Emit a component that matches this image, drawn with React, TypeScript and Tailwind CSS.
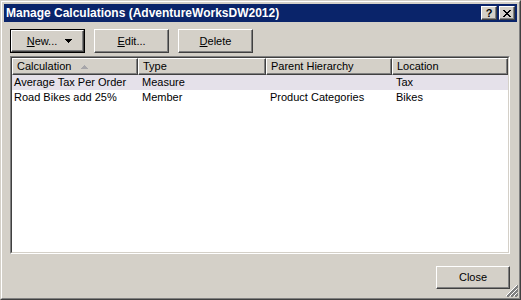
import React from 'react';

const FONT = "font-['Liberation_Sans',Arial,sans-serif]";
const RAISED =
  'border border-t-white border-l-white border-r-[#404040] border-b-[#404040] shadow-[inset_-1px_-1px_0_#808080] bg-[#d4d0c8]';

interface Row {
  name: string;
  type: string;
  parent: string;
  location: string;
}

const rows: Row[] = [
  { name: 'Average Tax Per Order', type: 'Measure', parent: '', location: 'Tax' },
  { name: 'Road Bikes add 25%', type: 'Member', parent: 'Product Categories', location: 'Bikes' },
];

const columns = [
  { label: 'Calculation', width: 'w-[126px]', sorted: true },
  { label: 'Type', width: 'w-[128px]', sorted: false },
  { label: 'Parent Hierarchy', width: 'w-[126px]', sorted: false },
  { label: 'Location', width: 'flex-1', sorted: false },
];

function Button({ children, className = '' }: { children: React.ReactNode; className?: string }) {
  return (
    <div className={`${RAISED} flex items-center justify-center text-[11px] text-black ${className}`}>
      {children}
    </div>
  );
}

export default function App() {
  return (
    <div className={`relative w-[521px] h-[300px] border border-t-[#d4d0c8] border-l-[#d4d0c8] border-r-[#404040] border-b-[#404040] ${FONT}`}>
      <div className="h-full border border-t-white border-l-white border-r-[#808080] border-b-[#808080] bg-[#d4d0c8] p-[2px] flex flex-col">
        {/* title bar */}
        <div className="h-[18px] bg-[#0a246a] flex items-center pl-[2px] pr-[2px]">
          <span className="text-white font-bold text-[12px] leading-none">
            Manage Calculations (AdventureWorksDW2012)
          </span>
          <div className="ml-auto flex gap-[2px]">
            <div className={`${RAISED} w-[16px] h-[14px] flex items-center justify-center`}>
              <span className="text-[11px] font-bold leading-none text-black">?</span>
            </div>
            <div className={`${RAISED} w-[16px] h-[14px] flex items-center justify-center`}>
              <svg width="8" height="7" viewBox="0 0 8 7" shapeRendering="crispEdges">
                <path d="M0 0h2v1H0zM6 0h2v1H6zM1 1h2v1H1zM5 1h2v1H5zM2 2h4v1H2zM3 3h2v1H3zM2 4h4v1H2zM1 5h2v1H1zM5 5h2v1H5zM0 6h2v1H0zM6 6h2v1H6z" fill="#000" />
              </svg>
            </div>
          </div>
        </div>

        {/* body */}
        <div className="flex-1 flex flex-col pl-[6px] pr-[7px] pt-[7px] pb-[7px]">
          <div className="flex gap-[9px] h-[24px]">
            <div className="w-[75px] h-full border border-black">
              <Button className="w-full h-full gap-[8px] pl-[4px]">
                <span>
                  <span className="underline">N</span>ew...
                </span>
                <svg width="7" height="4" viewBox="0 0 7 4" shapeRendering="crispEdges">
                  <path d="M0 0h7v1H0zM1 1h5v1H1zM2 2h3v1H2zM3 3h1v1H3z" fill="#000" />
                </svg>
              </Button>
            </div>
            <Button className="w-[75px] h-full">
              <span>
                <span className="underline">E</span>dit...
              </span>
            </Button>
            <Button className="w-[75px] h-full">
              <span>
                <span className="underline">D</span>elete
              </span>
            </Button>
          </div>

          {/* list */}
          <div className="mt-[3px] flex-1 border border-t-[#808080] border-l-[#808080] border-r-white border-b-white">
            <div className="h-full border border-t-[#404040] border-l-[#404040] border-r-[#d4d0c8] border-b-[#d4d0c8] bg-white flex flex-col">
              <div className="flex h-[17px]">
                {columns.map((c) => (
                  <div key={c.label} className={`${RAISED} ${c.width} flex items-center pl-[4px] text-[11px] text-black`}>
                    <span>{c.label}</span>
                    {c.sorted && (
                      <svg className="ml-[10px]" width="7" height="4" viewBox="0 0 7 4" shapeRendering="crispEdges">
                        <path d="M3 0h1v1H3zM2 1h3v1H2zM1 2h5v1H1zM0 3h7v1H0z" fill="#a7a6aa" />
                      </svg>
                    )}
                  </div>
                ))}
              </div>
              {rows.map((r, i) => (
                <div key={r.name} className={`flex h-[15px] items-center text-[11px] text-black ${i === 0 ? 'bg-[#e5e1ea]' : ''}`}>
                  <div className="w-[126px] pl-[2px]">{r.name}</div>
                  <div className="w-[128px] pl-[4px]">{r.type}</div>
                  <div className="w-[126px] pl-[4px]">{r.parent}</div>
                  <div className="flex-1 pl-[4px]">{r.location}</div>
                </div>
              ))}
            </div>
          </div>

          <div className="mt-[12px] flex justify-end">
            <Button className="w-[74px] h-[23px]">Close</Button>
          </div>
        </div>
      </div>

      {/* size grip */}
      <svg className="absolute right-[2px] bottom-[2px]" width="12" height="12" viewBox="0 0 12 12" shapeRendering="crispEdges">
        <path d="M11 0L0 11M11 4L4 11M11 8L8 11" stroke="#ffffff" strokeWidth="1" />
        <path d="M12 1L1 12M12 5L5 12M12 9L9 12" stroke="#808080" strokeWidth="1.5" />
      </svg>
    </div>
  );
}
